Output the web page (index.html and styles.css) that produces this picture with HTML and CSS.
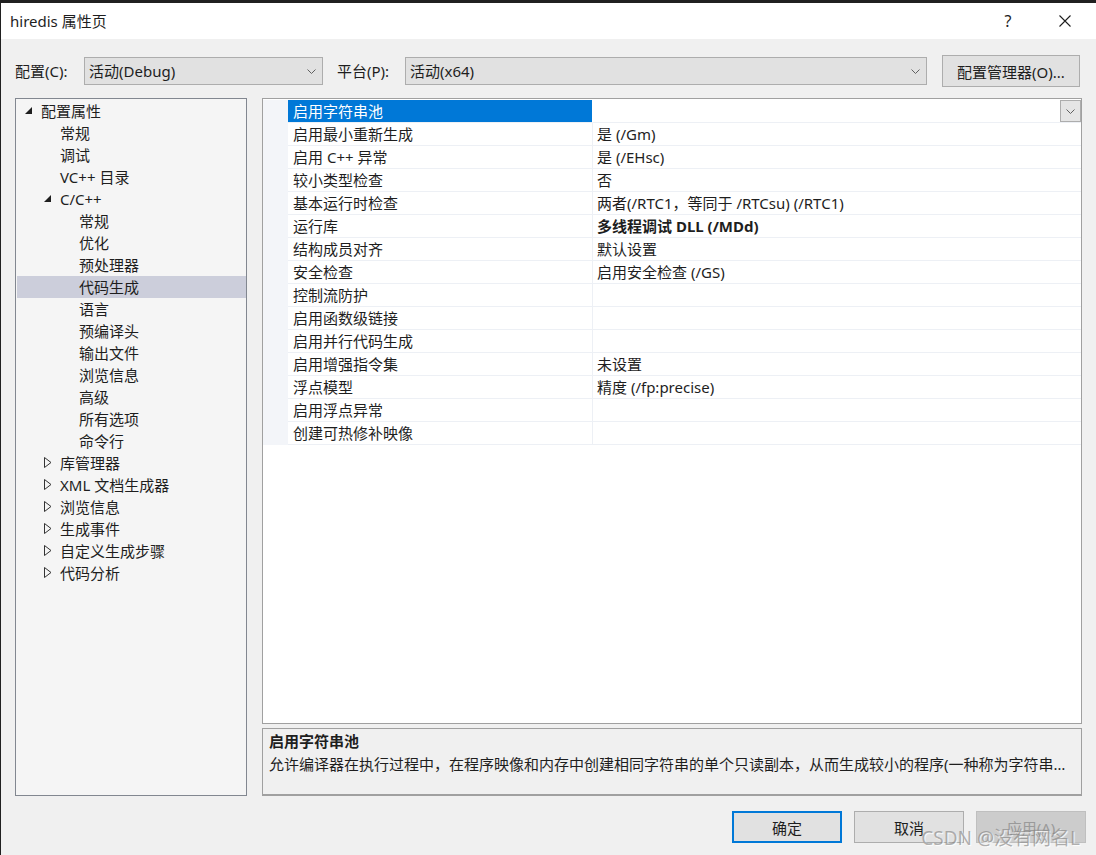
FILE: index.html
```html
<!DOCTYPE html>
<html lang="zh-CN">
<head>
    <meta charset="UTF-8">
    <title>hiredis 属性页</title>
    <link rel="stylesheet" href="styles.css">
</head>
<body>

    <div class="window">
        <div class="titlebar">
            <span class="title">hiredis 属性页</span>
            <span class="cap-btn help">?</span>
            <span class="cap-btn close">
                <svg width="12" height="12" viewBox="0 0 12 12"><path d="M0.5 0.5 L11.5 11.5 M11.5 0.5 L0.5 11.5" stroke="#1e1e1e" stroke-width="1.1" fill="none"/></svg>
            </span>
        </div>

        <div class="toolbar">
            <label class="lbl lbl-config">配置(C):</label>
            <div class="combo combo-config">
                <span>活动(Debug)</span>
                <svg class="chev" width="9" height="5" viewBox="0 0 9 5"><path d="M0.5 0.5 L4.5 4.5 L8.5 0.5" stroke="#606060" fill="none"/></svg>
            </div>
            <label class="lbl lbl-platform">平台(P):</label>
            <div class="combo combo-platform">
                <span>活动(x64)</span>
                <svg class="chev" width="9" height="5" viewBox="0 0 9 5"><path d="M0.5 0.5 L4.5 4.5 L8.5 0.5" stroke="#606060" fill="none"/></svg>
            </div>
            <button class="btn btn-manager">配置管理器(O)...</button>
        </div>

        <div class="content">
            <div class="tree">
                <div class="node lv0"><span class="tog"><svg width="7" height="7" viewBox="0 0 7 7"><path d="M7 0 L7 7 L0 7 Z" fill="#1e1e1e"/></svg></span>配置属性</div>
                <div class="node lv1"><span class="tog"></span>常规</div>
                <div class="node lv1"><span class="tog"></span>调试</div>
                <div class="node lv1"><span class="tog"></span>VC++ 目录</div>
                <div class="node lv1"><span class="tog"><svg width="7" height="7" viewBox="0 0 7 7"><path d="M7 0 L7 7 L0 7 Z" fill="#1e1e1e"/></svg></span>C/C++</div>
                <div class="node lv2"><span class="tog"></span>常规</div>
                <div class="node lv2"><span class="tog"></span>优化</div>
                <div class="node lv2"><span class="tog"></span>预处理器</div>
                <div class="node lv2 selected"><span class="tog"></span>代码生成</div>
                <div class="node lv2"><span class="tog"></span>语言</div>
                <div class="node lv2"><span class="tog"></span>预编译头</div>
                <div class="node lv2"><span class="tog"></span>输出文件</div>
                <div class="node lv2"><span class="tog"></span>浏览信息</div>
                <div class="node lv2"><span class="tog"></span>高级</div>
                <div class="node lv2"><span class="tog"></span>所有选项</div>
                <div class="node lv2"><span class="tog"></span>命令行</div>
                <div class="node lv1"><span class="tog"><svg width="8" height="11" viewBox="0 0 8 11"><path d="M0.5 0.5 L7 5.5 L0.5 10.5 Z" fill="none" stroke="#333"/></svg></span>库管理器</div>
                <div class="node lv1"><span class="tog"><svg width="8" height="11" viewBox="0 0 8 11"><path d="M0.5 0.5 L7 5.5 L0.5 10.5 Z" fill="none" stroke="#333"/></svg></span>XML 文档生成器</div>
                <div class="node lv1"><span class="tog"><svg width="8" height="11" viewBox="0 0 8 11"><path d="M0.5 0.5 L7 5.5 L0.5 10.5 Z" fill="none" stroke="#333"/></svg></span>浏览信息</div>
                <div class="node lv1"><span class="tog"><svg width="8" height="11" viewBox="0 0 8 11"><path d="M0.5 0.5 L7 5.5 L0.5 10.5 Z" fill="none" stroke="#333"/></svg></span>生成事件</div>
                <div class="node lv1"><span class="tog"><svg width="8" height="11" viewBox="0 0 8 11"><path d="M0.5 0.5 L7 5.5 L0.5 10.5 Z" fill="none" stroke="#333"/></svg></span>自定义生成步骤</div>
                <div class="node lv1"><span class="tog"><svg width="8" height="11" viewBox="0 0 8 11"><path d="M0.5 0.5 L7 5.5 L0.5 10.5 Z" fill="none" stroke="#333"/></svg></span>代码分析</div>
            </div>

            <div class="right">
                <div class="grid">
                    <div class="row">
                        <span class="gutter"></span>
                        <span class="name active">启用字符串池</span>
                        <span class="value">
                            <span class="drop"><svg width="9" height="5" viewBox="0 0 9 5"><path d="M0.5 0.5 L4.5 4.5 L8.5 0.5" stroke="#606060" fill="none"/></svg></span>
                        </span>
                    </div>
                    <div class="row"><span class="gutter"></span><span class="name">启用最小重新生成</span><span class="value">是 (/Gm)</span></div>
                    <div class="row"><span class="gutter"></span><span class="name">启用 C++ 异常</span><span class="value">是 (/EHsc)</span></div>
                    <div class="row"><span class="gutter"></span><span class="name">较小类型检查</span><span class="value">否</span></div>
                    <div class="row"><span class="gutter"></span><span class="name">基本运行时检查</span><span class="value">两者(/RTC1，等同于 /RTCsu) (/RTC1)</span></div>
                    <div class="row"><span class="gutter"></span><span class="name">运行库</span><span class="value bold">多线程调试 DLL (/MDd)</span></div>
                    <div class="row"><span class="gutter"></span><span class="name">结构成员对齐</span><span class="value">默认设置</span></div>
                    <div class="row"><span class="gutter"></span><span class="name">安全检查</span><span class="value">启用安全检查 (/GS)</span></div>
                    <div class="row"><span class="gutter"></span><span class="name">控制流防护</span><span class="value"></span></div>
                    <div class="row"><span class="gutter"></span><span class="name">启用函数级链接</span><span class="value"></span></div>
                    <div class="row"><span class="gutter"></span><span class="name">启用并行代码生成</span><span class="value"></span></div>
                    <div class="row"><span class="gutter"></span><span class="name">启用增强指令集</span><span class="value">未设置</span></div>
                    <div class="row"><span class="gutter"></span><span class="name">浮点模型</span><span class="value">精度 (/fp:precise)</span></div>
                    <div class="row"><span class="gutter"></span><span class="name">启用浮点异常</span><span class="value"></span></div>
                    <div class="row"><span class="gutter"></span><span class="name">创建可热修补映像</span><span class="value"></span></div>
                </div>

                <div class="desc">
                    <div class="desc-title">启用字符串池</div>
                    <div class="desc-text">允许编译器在执行过程中，在程序映像和内存中创建相同字符串的单个只读副本，从而生成较小的程序(一种称为字符串池的优化)。</div>
                </div>
            </div>
        </div>

        <div class="footer">
            <button class="btn btn-ok">确定</button>
            <button class="btn">取消</button>
            <button class="btn btn-disabled">应用(A)</button>
        </div>

        <div class="watermark">CSDN @没有网名L</div>
    </div>

</body>
</html>
```

FILE: styles.css
```css
*,
::after,
::before {
    margin: 0;
    padding: 0;
    box-sizing: border-box;
}

html {
    font-family: "Noto Sans", "Noto Sans CJK SC", sans-serif;
    font-size: 15px;
    color: #1e1e1e;
}

body {
    background-color: #202020;
    height: 855px;
    overflow: hidden;
    padding: 3px 0 0 1px;
}

.window {
    position: relative;
    background-color: #f0f0f0;
    height: 852px;
    padding: 0 10px 0 14px;
}

/* title bar */
.titlebar {
    display: flex;
    align-items: center;
    height: 36px;
    margin: 0 -10px 0 -14px;
    padding: 0 8px 0 9px;
    background-color: #fff;
}

.title {
    flex: 1;
    line-height: 20px;
}

.cap-btn {
    width: 46px;
    height: 36px;
    display: flex;
    align-items: center;
    justify-content: center;
}

.help {
    font-size: 16px;
    margin-right: 11px;
}

/* config row */
.toolbar {
    display: flex;
    align-items: center;
    height: 32px;
    margin-top: 16px;
}

.lbl {
    line-height: 20px;
}

.lbl-config {
    width: 69px;
}

.lbl-platform {
    width: 82px;
    padding-left: 14px;
}

.combo {
    height: 28px;
    display: flex;
    align-items: center;
    justify-content: space-between;
    background-color: #e1e1e1;
    border: 1px solid #adadad;
    padding: 0 6px 0 4px;
    line-height: 20px;
}

.combo-config {
    width: 239px;
}

.combo-platform {
    width: 522px;
    margin-right: 15px;
}

.btn {
    font-family: inherit;
    font-size: 15px;
    color: #1e1e1e;
    background-color: #e1e1e1;
    border: 1px solid #adadad;
    height: 32px;
}

.btn-manager {
    width: 138px;
}

/* main area */
.content {
    display: flex;
    gap: 15px;
    margin-top: 11px;
    height: 698px;
}

.tree {
    width: 232px;
    background-color: #f5f5f5;
    border: 1px solid #828790;
    padding: 1px 0 0 1px;
}

.node {
    display: flex;
    align-items: center;
    height: 22px;
    line-height: 22px;
    width: 229px;
    white-space: nowrap;
}

.node.selected {
    background-color: #cccedb;
}

.tog {
    width: 16px;
    height: 22px;
    display: flex;
    align-items: center;
    padding-bottom: 1px;
}

.lv0 { padding-left: 8px; }
.lv1 { padding-left: 27px; }
.lv2 { padding-left: 46px; }

.right {
    width: 820px;
    display: flex;
    flex-direction: column;
    gap: 4px;
}

.grid {
    height: 626px;
    background-color: #fff;
    border: 1px solid #a0a0a0;
    padding-top: 1px;
}

.row {
    display: flex;
    height: 23px;
    line-height: 22px;
}

.gutter {
    width: 25px;
    background-color: #f3f5f9;
}

.name {
    width: 305px;
    padding-left: 5px;
    border-bottom: 1px solid #edf0f5;
    border-right: 1px solid #edf0f5;
    white-space: nowrap;
}

.name.active {
    background-color: #0078d7;
    color: #fff;
    border-right-color: #fff;
}

.value {
    flex: 1;
    display: flex;
    padding-left: 4px;
    border-bottom: 1px solid #edf0f5;
    white-space: nowrap;
}

.value.bold {
    font-weight: bold;
}

.drop {
    margin-left: auto;
    width: 21px;
    height: 22px;
    display: flex;
    align-items: center;
    justify-content: center;
    background-color: #e5e5e5;
    border: 1px solid #adadad;
}

.desc {
    height: 68px;
    border: 1px solid #a0a0a0;
    border-bottom-width: 2px;
    padding: 1px 14px 0 6px;
}

.desc-title {
    font-weight: bold;
    line-height: 22px;
}

.desc-text {
    line-height: 22px;
    margin-top: 1px;
    white-space: nowrap;
    overflow: hidden;
    text-overflow: ellipsis;
}

/* dialog buttons */
.footer {
    display: flex;
    justify-content: flex-end;
    gap: 12px;
    margin-top: 15px;
}

.footer .btn {
    width: 110px;
}

.btn-ok {
    border: 2px solid #0078d7;
}

.btn-disabled {
    background-color: #cccccc;
    border-color: #bfbfbf;
    color: #9a9a9a;
}

.watermark {
    position: absolute;
    right: 16px;
    top: 822px;
    font-size: 19px;
    line-height: 26px;
    color: rgba(125, 125, 125, 0.6);
    text-shadow: 1px 1px 1px rgba(255, 255, 255, 0.9);
    pointer-events: none;
}
```
